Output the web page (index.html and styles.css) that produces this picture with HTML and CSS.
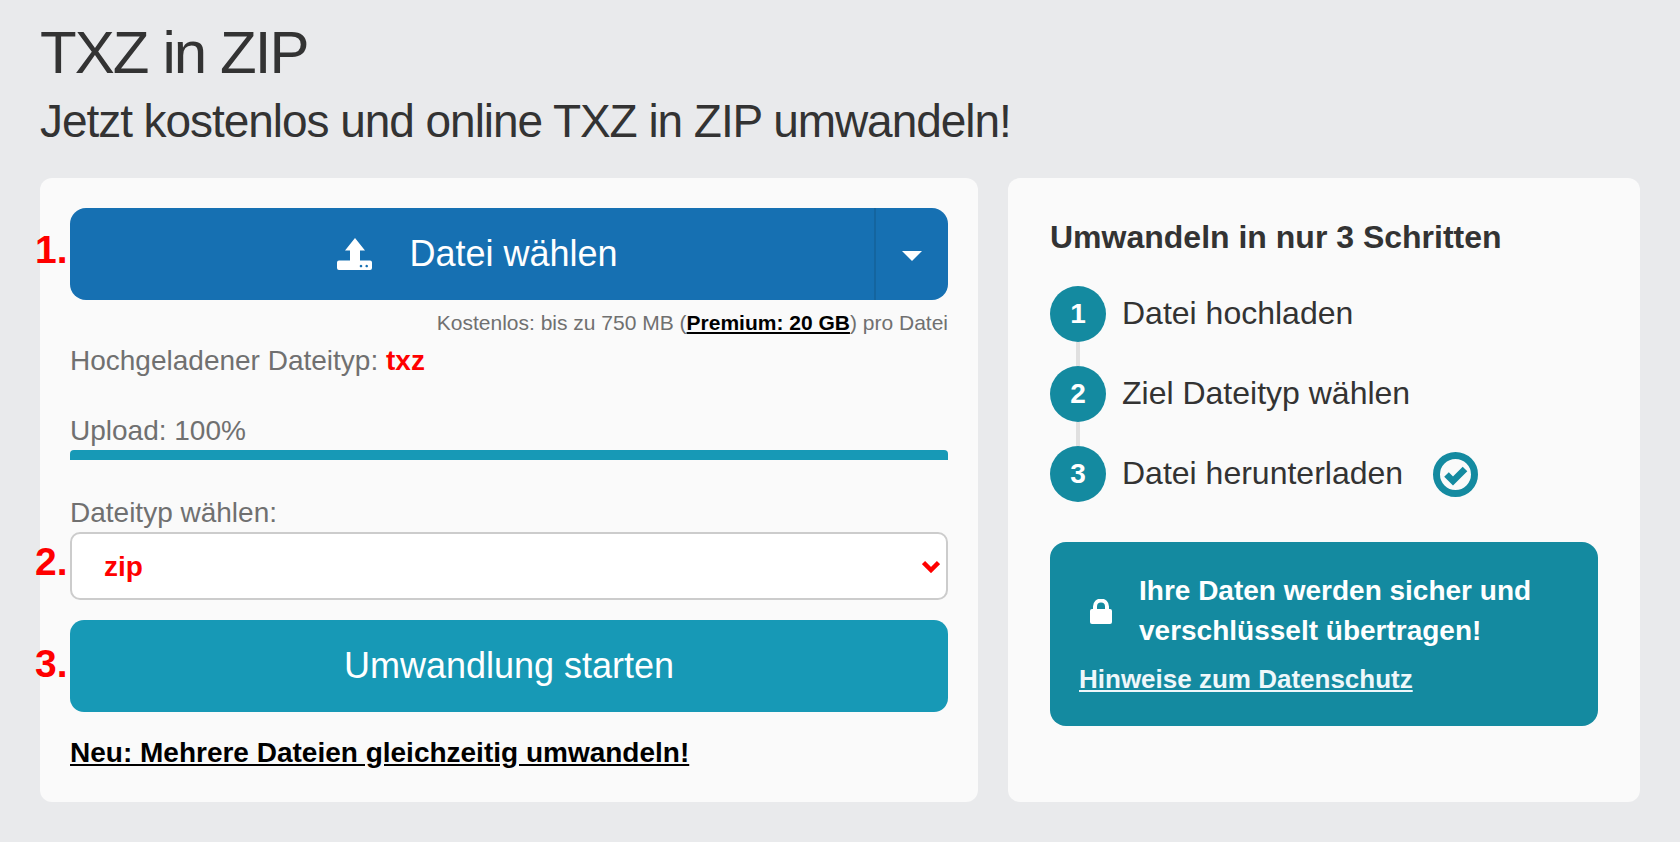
FILE: index.html
```html
<!DOCTYPE html>
<html lang="de">
<head>
    <meta charset="UTF-8">
    <meta name="viewport" content="width=device-width, initial-scale=1.0">
    <title>TXZ in ZIP</title>
    <link rel="stylesheet" href="styles.css">
</head>
<body>
    <h1>TXZ in ZIP</h1>
    <h2>Jetzt kostenlos und online TXZ in ZIP umwandeln!</h2>

    <div class="columns">
        <div class="card convert">
            <div class="numbered">
                <span class="number">1.</span>
                <div class="choose">
                    <button class="choose-main">
                        <svg class="upload-icon" viewBox="0 0 35 32"><path d="M18 0 28 12.500h-5V24H13V12.500H8z"/><path fill-rule="evenodd" d="M2 22.500h31a2 2 0 0 1 2 2V30a2 2 0 0 1-2 2H2a2 2 0 0 1-2-2v-5.500a2 2 0 0 1 2-2zM25.300 28a1.300 1.300 0 1 0 0 .01zM31 28a1.300 1.300 0 1 0 0 .01z"/></svg>
                        Datei wählen
                    </button>
                    <button class="choose-more"><span class="caret"></span></button>
                </div>
            </div>
            <p class="limit">Kostenlos: bis zu 750 MB (<a href="#">Premium: 20 GB</a>) pro Datei</p>
            <p class="filetype">Hochgeladener Dateityp: <b>txz</b></p>
            <p class="upload-label">Upload: 100%</p>
            <div class="progress"></div>
            <label class="select-label" for="target">Dateityp wählen:</label>
            <div class="numbered">
                <span class="number">2.</span>
                <div class="select-wrap">
                    <select id="target"><option>zip</option></select>
                    <svg class="chevron" viewBox="0 0 18 13"><path d="M1.500 2.500l7.500 7.500 7.500-7.500" fill="none" stroke="#f00" stroke-width="4.500"/></svg>
                </div>
            </div>
            <div class="numbered start-row">
                <span class="number">3.</span>
                <button class="start">Umwandlung starten</button>
            </div>
            <a class="multi" href="#">Neu: Mehrere Dateien gleichzeitig umwandeln!</a>
        </div>

        <div class="card steps">
            <h3>Umwandeln in nur 3 Schritten</h3>
            <ul>
                <li><span class="circle">1</span><span class="step-text">Datei hochladen</span></li>
                <li><span class="circle">2</span><span class="step-text">Ziel Dateityp wählen</span></li>
                <li><span class="circle">3</span><span class="step-text">Datei herunterladen</span>
                    <svg class="check" viewBox="0 0 45 45"><circle cx="22.500" cy="22.500" r="19" fill="none" stroke="#148aa0" stroke-width="7"/><path d="M13.500 22.500l6.500 6.500 12-12" fill="none" stroke="#148aa0" stroke-width="6.500"/></svg>
                </li>
            </ul>
            <div class="secure">
                <div class="secure-top">
                    <svg class="lock" viewBox="0 0 22 25"><path d="M3 11V7.500a8 8 0 0 1 16 0V11h-4V7.500a4 4 0 0 0-8 0V11z"/><rect y="10" width="22" height="15" rx="2"/></svg>
                    <p>Ihre Daten werden sicher und verschlüsselt übertragen!</p>
                </div>
                <a href="#">Hinweise zum Datenschutz</a>
            </div>
        </div>
    </div>
</body>
</html>
```

FILE: styles.css
```css
* {
    margin: 0;
    padding: 0;
    box-sizing: border-box;
    font-family: "Liberation Sans", Arial, sans-serif;
}

body {
    background: #e9eaec;
    padding: 19px 40px 0;
    color: #333;
}

h1 {
    font-size: 60px;
    font-weight: 400;
    line-height: 68px;
    letter-spacing: -1.9px;
}

h2 {
    font-size: 46px;
    font-weight: 400;
    line-height: 52px;
    letter-spacing: -1.05px;
    margin-top: 8px;
}

.columns {
    display: grid;
    grid-template-columns: 938px 632px;
    gap: 30px;
    margin-top: 31px;
}

.card {
    background: #fafafa;
    border-radius: 12px;
    height: 624px;
}

.convert {
    padding: 30px;
}

.numbered {
    position: relative;
}

.number {
    position: absolute;
    left: -35px;
    top: 50%;
    transform: translateY(-50%);
    margin-top: -4px;
    color: #f00;
    font-size: 39px;
    font-weight: 700;
}

.start-row .number {
    margin-top: -2px;
}

.choose {
    display: flex;
    height: 92px;
}

button {
    border: none;
    color: #fff;
    cursor: pointer;
}

.choose-main {
    flex: 1;
    display: flex;
    justify-content: center;
    align-items: center;
    gap: 37px;
    padding-left: 11px;
    background: #1670b2;
    border-right: 2px solid #14659f;
    border-radius: 16px 0 0 16px;
    font-size: 36px;
}

.upload-icon {
    width: 35px;
    height: 32px;
    fill: #fff;
}

.choose-more {
    width: 72px;
    display: flex;
    justify-content: center;
    align-items: center;
    background: #1670b2;
    border-radius: 0 16px 16px 0;
}

.caret {
    border-left: 10px solid transparent;
    border-right: 10px solid transparent;
    border-top: 10px solid #fff;
    margin-top: 4px;
}

.limit {
    margin-top: 10px;
    text-align: right;
    font-size: 21px;
    line-height: 26px;
    color: #707070;
}

.limit a {
    color: #000;
    font-weight: 700;
}

.filetype {
    margin-top: 10px;
    font-size: 28px;
    line-height: 30px;
    color: #707070;
}

.filetype b {
    color: #f00;
}

.upload-label {
    margin-top: 39px;
    font-size: 28px;
    line-height: 32px;
    color: #707070;
}

.progress {
    height: 10px;
    margin-top: 3px;
    background: #1799b6;
    border-radius: 4px 4px 0 0;
}

.select-label {
    display: block;
    margin-top: 37px;
    font-size: 28px;
    line-height: 32px;
    color: #707070;
}

.select-wrap {
    position: relative;
    margin-top: 3px;
}

select {
    appearance: none;
    display: block;
    width: 100%;
    height: 68px;
    padding-left: 32px;
    background: #fff;
    border: 2px solid #ccc;
    border-radius: 10px;
    color: #f00;
    font-size: 28px;
    font-weight: 700;
}

.chevron {
    position: absolute;
    right: 8px;
    top: 28px;
    width: 18px;
    height: 13px;
}

.start-row {
    margin-top: 20px;
}

.start {
    display: block;
    width: 100%;
    height: 92px;
    background: #1799b6;
    border-radius: 14px;
    font-size: 36px;
}

.multi {
    display: block;
    margin-top: 25px;
    color: #000;
    font-size: 28px;
    font-weight: 700;
    line-height: 32px;
}

.steps {
    padding: 41px 42px 0;
}

h3 {
    font-size: 32px;
    line-height: 36px;
}

.steps ul {
    list-style: none;
    margin-top: 31px;
}

.steps li {
    position: relative;
    display: flex;
    align-items: center;
    gap: 16px;
    height: 56px;
    margin-bottom: 24px;
    font-size: 32px;
}

.steps li + li::before {
    content: "";
    position: absolute;
    left: 26px;
    top: -24px;
    width: 4px;
    height: 24px;
    background: #e0e0e0;
}

.circle {
    width: 56px;
    height: 56px;
    display: flex;
    justify-content: center;
    align-items: center;
    background: #148aa0;
    border-radius: 50%;
    color: #fff;
    font-size: 28px;
    font-weight: 700;
}

.step-text {
    padding-bottom: 2px;
}

.check {
    width: 45px;
    height: 45px;
    margin-left: 14px;
}

.secure {
    margin-top: 40px;
    padding: 29px 29px 27px;
    background: #148aa0;
    border-radius: 16px;
    color: #fff;
    font-size: 28px;
    font-weight: 700;
    line-height: 40px;
}

.secure-top {
    display: flex;
    align-items: center;
    gap: 27px;
    padding-left: 11px;
}

.lock {
    flex: none;
    width: 22px;
    height: 25px;
    fill: #fff;
}

.secure a {
    display: block;
    margin-top: 8px;
    color: #eef7fa;
    font-size: 26px;
}
```
